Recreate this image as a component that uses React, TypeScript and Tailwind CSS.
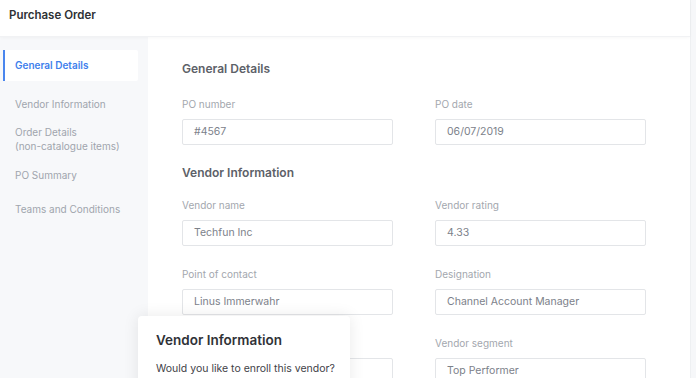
import React from "react";

const navItems = [
  { label: "Vendor Information", mt: "mt-[16px]" },
  { label: "Order Details\n(non-catalogue items)", mt: "mt-[14px]" },
  { label: "PO Summary", mt: "mt-[15px]" },
  { label: "Teams and Conditions", mt: "mt-[20px]" },
];

function Field({ label, value }: { label: string; value: string }) {
  return (
    <div className="flex flex-col">
      <label className="h-[14px] text-[10px] leading-[14px] text-[#a3a7ae]">{label}</label>
      <div className="mt-[8px] h-[26px] w-[211px] rounded-[2px] border border-[#e3e5e8] bg-white flex items-center">
        <span className="ml-[11px] text-[10.5px] text-[#7c818a]">{value}</span>
      </div>
    </div>
  );
}

export default function App() {
  return (
    <div className="w-[696px] h-[378px] overflow-hidden flex bg-[#f6f7f9] font-['Inter',sans-serif] relative">
      <div className="w-[690px] flex flex-col">
        {/* Header */}
        <div className="h-[37px] shrink-0 bg-white border-b border-[#f1f2f4] shadow-[0_1px_3px_rgba(0,0,0,0.03)] pl-[9px] pt-[7px] z-10">
          <h1 className="text-[11.5px] leading-[16px] font-semibold text-[#2e3135]">Purchase Order</h1>
        </div>

        <div className="flex flex-1">
          {/* Sidebar */}
          <aside className="w-[148px] shrink-0 bg-[#f7f8fa] pt-[13px]">
            <div className="ml-[3px] w-[135px] h-[31px] bg-white border-l-[2px] border-[#4a86ee] pl-[10px] flex items-center rounded-r-[2px]">
              <span className="text-[10px] font-semibold text-[#3f7fec]">General Details</span>
            </div>
            {navItems.map((item) => (
              <div
                key={item.label}
                className={`${item.mt} pl-[15px] text-[10px] leading-[14px] text-[#a0a5ad] whitespace-pre-line`}
              >
                {item.label}
              </div>
            ))}
          </aside>

          {/* Main */}
          <main className="flex-1 bg-white pl-[34px] pt-[24px]">
            <h2 className="text-[12px] leading-[16px] font-semibold text-[#5d6168]">General Details</h2>
            <div className="mt-[20px] grid grid-cols-[211px_211px] gap-x-[42px]">
              <Field label="PO number" value="#4567" />
              <Field label="PO date" value="06/07/2019" />
            </div>

            <h2 className="mt-[20px] text-[12px] leading-[16px] font-semibold text-[#5d6168]">Vendor Information</h2>
            <div className="mt-[17px] grid grid-cols-[211px_211px] gap-x-[42px] gap-y-[21px]">
              <Field label="Vendor name" value="Techfun Inc" />
              <Field label="Vendor rating" value="4.33" />
              <Field label="Point of contact" value="Linus Immerwahr" />
              <Field label="Designation" value="Channel Account Manager" />
              <Field label="" value="" />
              <Field label="Vendor segment" value="Top Performer" />
            </div>
          </main>
        </div>
      </div>

      {/* Right strip */}
      <div className="flex-1 bg-[#f6f7f9] border-l border-[#eef0f2]" />

      {/* Popup card */}
      <div className="absolute left-[138px] top-[316px] w-[212px] h-[80px] bg-white rounded-t-[4px] shadow-[0_0_16px_rgba(0,0,0,0.09)] pl-[18px] pt-[15px] z-20">
        <h3 className="text-[13.5px] leading-[18px] font-semibold text-[#2f3237]">Vendor Information</h3>
        <p className="mt-[13px] text-[10.5px] leading-[14px] text-[#3f4247]">Would you like to enroll this vendor?</p>
      </div>
    </div>
  );
}
